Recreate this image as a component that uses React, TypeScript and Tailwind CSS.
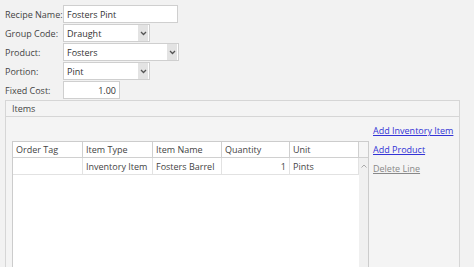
import React from "react"

const font = { fontFamily: '"Open Sans", "Noto Sans", sans-serif' }

function Chevron() {
  return (
    <svg width="7" height="5" viewBox="0 0 7 5" className="block">
      <path d="M1 1 L3.5 3.5 L6 1" fill="none" stroke="#555" strokeWidth="1.3" />
    </svg>
  )
}

function TextBox({ value, width, right }: { value: string; width: string; right?: boolean }) {
  return (
    <div
      className={`${width} h-[18px] bg-white border border-[#cfcfcf] flex items-center px-[3px] text-[#333] ${
        right ? "justify-end" : ""
      }`}
    >
      {value}
    </div>
  )
}

function Combo({ value, width }: { value: string; width: string }) {
  return (
    <div className={`${width} h-[18px] bg-white border border-[#cfcfcf] flex items-center text-[#333]`}>
      <span className="flex-1 pl-[3px]">{value}</span>
      <span className="w-[10px] h-[16px] bg-[#e3e3e3] flex items-center justify-center mr-[1px]">
        <Chevron />
      </span>
    </div>
  )
}

function Row({ label, children }: { label: string; children: React.ReactNode }) {
  return (
    <div className="flex items-center h-[18px]">
      <span className="w-[58px] shrink-0 text-[#444] whitespace-nowrap">{label}</span>
      {children}
    </div>
  )
}

const cols = [
  { name: "Order Tag", w: "w-[70px]" },
  { name: "Item Type", w: "w-[70px]" },
  { name: "Item Name", w: "w-[69px]" },
  { name: "Quantity", w: "w-[68px]" },
  { name: "Unit", w: "w-[69px]" },
]

export default function App() {
  return (
    <div className="w-[474px] h-[267px] overflow-hidden bg-[#f2f2f2] text-[9px] leading-none" style={font}>
      <div className="flex flex-col gap-[1px] pt-[5px] pl-[5px]">
        <Row label="Recipe Name:">
          <TextBox value="Fosters Pint" width="w-[115px]" />
        </Row>
        <Row label="Group Code:">
          <Combo value="Draught" width="w-[87px]" />
        </Row>
        <Row label="Product:">
          <Combo value="Fosters" width="w-[116px]" />
        </Row>
        <Row label="Portion:">
          <Combo value="Pint" width="w-[87px]" />
        </Row>
        <Row label="Fixed Cost:">
          <TextBox value="1.00" width="w-[57px]" right />
        </Row>
      </div>

      <div className="ml-[5px] mt-[1px] w-[455px] h-[200px] border border-[#d6d6d6] bg-[#f4f4f4]">
        <div className="h-[16px] border-b border-[#d6d6d6] flex items-center pl-[6px] text-[#444]">Items</div>
        <div className="flex pl-[6px]">
          <div className="mt-[24px] w-[357px] h-[140px] border border-[#cccccc] bg-white flex flex-col">
            <div className="flex h-[16px] border-b border-[#d0d0d0]">
              {cols.map((c) => (
                <div key={c.name} className={`${c.w} border-r border-[#d0d0d0] flex items-center pl-[3px] text-[#444]`}>
                  {c.name}
                </div>
              ))}
              <div className="flex-1 bg-[#f5f5f5]" />
            </div>
            <div className="flex flex-1">
              <div className="flex flex-col">
                <div className="flex h-[17px] border-b border-[#e2e2e2]">
                  <div className="w-[70px] border-r border-[#e2e2e2]" />
                  <div className="w-[70px] border-r border-[#e2e2e2] flex items-center pl-[3px] text-[#444] whitespace-nowrap">
                    Inventory Item
                  </div>
                  <div className="w-[69px] border-r border-[#e2e2e2] flex items-center pl-[3px] text-[#444] whitespace-nowrap">
                    Fosters Barrel
                  </div>
                  <div className="w-[68px] border-r border-[#e2e2e2] flex items-center justify-end pr-[3px] text-[#444]">
                    1
                  </div>
                  <div className="w-[69px] border-r border-[#e2e2e2] flex items-center pl-[3px] text-[#444]">
                    Pints
                  </div>
                </div>
              </div>
              <div className="flex-1 bg-[#f0f0f0] flex justify-center pt-[6px]">
                <svg width="6" height="4" viewBox="0 0 6 4" className="block">
                  <path d="M0.5 3.5 L3 1 L5.5 3.5" fill="none" stroke="#aaa" strokeWidth="1" />
                </svg>
              </div>
            </div>
          </div>
          <div className="flex flex-col pl-[4px] pt-[9px] gap-[10px]">
            <a className="text-[#3333d6] underline whitespace-nowrap">Add Inventory Item</a>
            <a className="text-[#3333d6] underline whitespace-nowrap">Add Product</a>
            <a className="text-[#888] underline whitespace-nowrap">Delete Line</a>
          </div>
        </div>
      </div>
    </div>
  )
}
